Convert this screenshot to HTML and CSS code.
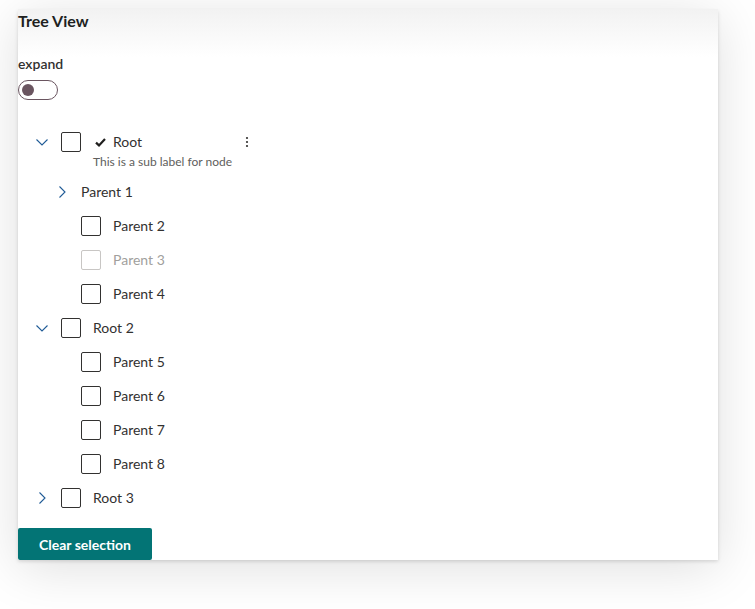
FILE: index.html
```html
<!DOCTYPE html>
<html lang="en">
<head>
<meta charset="UTF-8" />
<meta name="viewport" content="width=device-width, initial-scale=1" />
<title>Tree View</title>
<link rel="stylesheet" href="styles.css">
</head>
<body>

<div class="card">
  <div class="title">Tree View</div>

  <div class="toggle-field">
    <label class="toggle-label">expand</label>
    <div class="toggle"><span class="thumb"></span></div>
  </div>

  <div class="tree">
    <div class="node tall lvl0">
      <span class="chev"><svg width="12" height="7" viewBox="0 0 12 7"><path d="M0.5 0.5 L6 6 L11.5 0.5" /></svg></span>
      <span class="box"></span>
      <div class="label-block">
        <div class="label"><svg class="check" width="11" height="9" viewBox="0 0 11 9"><path d="M1 4.6 L4 7.4 L10 1" /></svg>Root</div>
        <div class="sub">This is a sub label for node</div>
      </div>
      <span class="more"><svg width="4" height="12" viewBox="0 0 4 12"><circle cx="2" cy="2" r="1.1"/><circle cx="2" cy="6" r="1.1"/><circle cx="2" cy="10" r="1.1"/></svg></span>
    </div>

    <div class="node lvl1">
      <span class="chev"><svg width="7" height="12" viewBox="0 0 7 12"><path d="M0.5 0.5 L6 6 L0.5 11.5" /></svg></span>
      <span class="text">Parent 1</span>
    </div>
    <div class="node lvl1">
      <span class="spacer"></span><span class="box"></span><span class="text">Parent 2</span>
    </div>
    <div class="node lvl1 disabled">
      <span class="spacer"></span><span class="box"></span><span class="text">Parent 3</span>
    </div>
    <div class="node lvl1">
      <span class="spacer"></span><span class="box"></span><span class="text">Parent 4</span>
    </div>

    <div class="node lvl0">
      <span class="chev"><svg width="12" height="7" viewBox="0 0 12 7"><path d="M0.5 0.5 L6 6 L11.5 0.5" /></svg></span>
      <span class="box"></span><span class="text">Root 2</span>
    </div>
    <div class="node lvl1">
      <span class="spacer"></span><span class="box"></span><span class="text">Parent 5</span>
    </div>
    <div class="node lvl1">
      <span class="spacer"></span><span class="box"></span><span class="text">Parent 6</span>
    </div>
    <div class="node lvl1">
      <span class="spacer"></span><span class="box"></span><span class="text">Parent 7</span>
    </div>
    <div class="node lvl1">
      <span class="spacer"></span><span class="box"></span><span class="text">Parent 8</span>
    </div>

    <div class="node lvl0">
      <span class="chev"><svg width="7" height="12" viewBox="0 0 7 12"><path d="M0.5 0.5 L6 6 L0.5 11.5" /></svg></span>
      <span class="box"></span><span class="text">Root 3</span>
    </div>
  </div>

  <button class="btn">Clear selection</button>
</div>

</body>
</html>
```

FILE: styles.css
```css
html, body { min-height: 100%; }
body { margin: 0; padding-bottom: 60px; background: #fff; font-family: "Segoe UI", Lato, "Noto Sans", sans-serif; color: #323130; }

.card {
  margin: 9px 0 0 18px; width: 700px;
  background: linear-gradient(to bottom, #f2f2f2, #fff 48px);
  box-shadow: 0 1.6px 3.6px rgba(0,0,0,0.14), 0 8px 50px rgba(0,0,0,0.13);
}
.title { font-size: 16px; font-weight: 700; line-height: 24px; color: #201f1e; }

.toggle-field { margin-top: 21px; }
.toggle-label { display: block; font-size: 14px; font-weight: 600; line-height: 20px; color: #323130; }
.toggle {
  margin-top: 6px; width: 40px; height: 20px; box-sizing: border-box;
  border: 1px solid #6a5560; border-radius: 10px; display: flex; align-items: center; padding-left: 3px;
}
.thumb { width: 12px; height: 12px; border-radius: 50%; background: #6a5560; }

.tree { margin-top: 24px; }
.node { display: flex; align-items: center; height: 34px; font-size: 14px; }
.node.tall { height: 51px; align-items: flex-start; padding-top: 8px; box-sizing: border-box; }
.lvl0 { padding-left: 12px; }
.lvl1 { padding-left: 32px; }

.chev { width: 24px; height: 20px; display: flex; justify-content: center; align-items: center; margin-right: 7px; }
.chev path { fill: none; stroke: #1f5b96; stroke-width: 1.1; }
.spacer { width: 31px; flex: none; }
.box { width: 20px; height: 20px; box-sizing: border-box; border: 1px solid #323130; border-radius: 2px; flex: none; }
.text { margin-left: 12px; line-height: 20px; }
.chev + .text { margin-left: 0; }
.disabled .box { border-color: #c8c6c4; }
.disabled .text { color: #a19f9d; }

.label-block { margin-left: 12px; }
.label { display: flex; align-items: center; line-height: 20px; }
.check { margin: 0 7px 0 2px; }
.check path { fill: none; stroke: #201f1e; stroke-width: 2.2; }
.sub { font-size: 12px; line-height: 16px; color: #605e5c; margin-top: 2px; }
.more { width: 20px; height: 20px; display: flex; justify-content: center; align-items: center; margin-left: 5px; }
.more circle { fill: #323130; }

.btn {
  margin-top: 13px; display: block; height: 32px; padding: 0 21px;
  background: #037475; color: #fff; border: none; border-radius: 2px;
  font-family: inherit; font-size: 14px; font-weight: 700;
}
```
